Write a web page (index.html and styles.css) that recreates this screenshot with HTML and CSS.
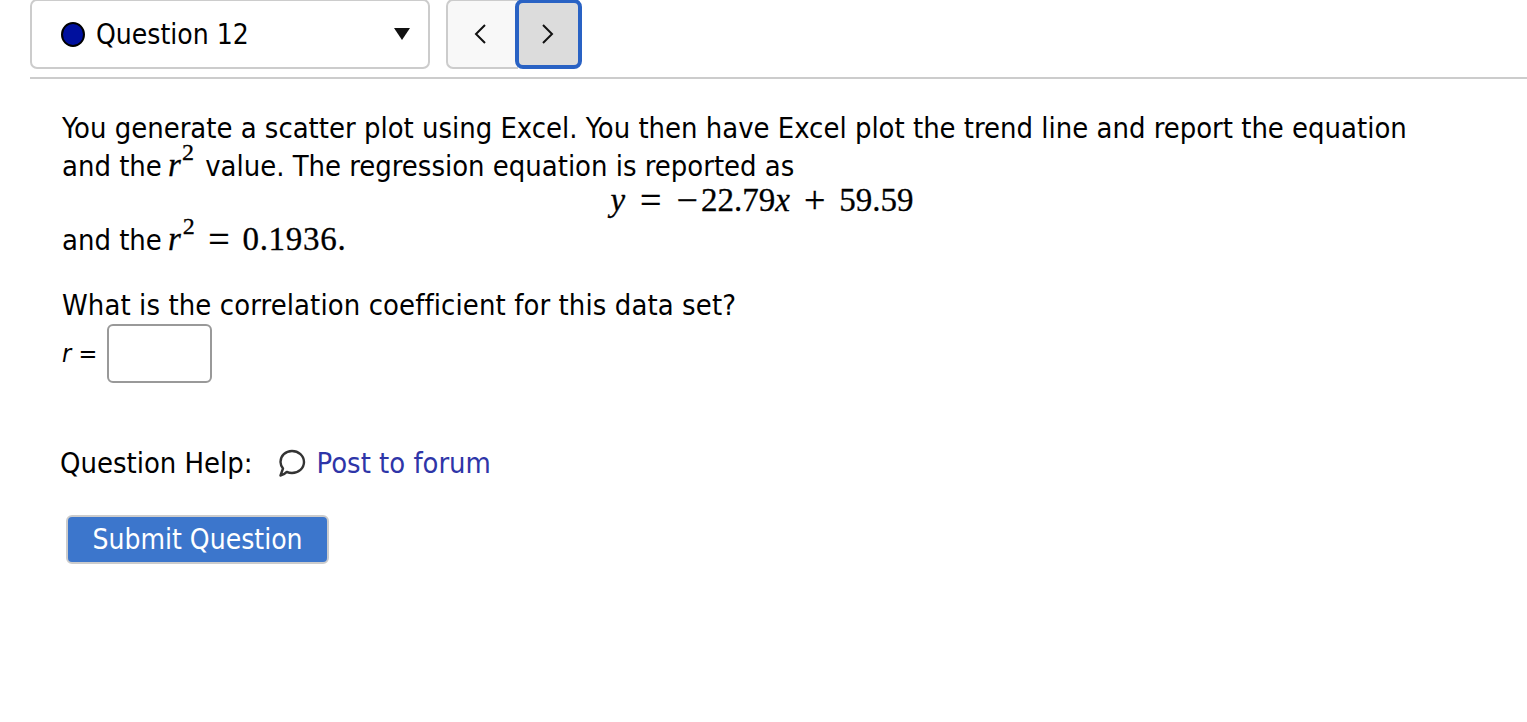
FILE: index.html
```html
<!DOCTYPE html>
<html lang="en">
<head>
    <meta charset="UTF-8">
    <title>Question 12</title>
    <link rel="stylesheet" href="styles.css">
</head>
<body>
    <div class="nav">
        <div class="select-box">
            <span class="status-dot"></span>
            <span class="select-label">Question 12</span>
            <span class="select-arrow"></span>
        </div>
        <div class="nav-btns">
            <button class="nav-btn prev">
                <svg width="14" height="22" viewBox="0 0 14 22"><path d="M12 2 3 11l9 9" fill="none" stroke="#111" stroke-width="2"/></svg>
            </button>
            <button class="nav-btn next">
                <svg width="14" height="22" viewBox="0 0 14 22"><path d="M2 2l9 9-9 9" fill="none" stroke="#111" stroke-width="2"/></svg>
            </button>
        </div>
    </div>

    <div class="question">
        <p class="para">You generate a scatter plot using Excel. You then have Excel plot the trend line and report the equation<br>
        and the <span class="math power"><i>r</i><sup>2</sup></span> value. The regression equation is reported as</p>
        <div class="math display"><i>y</i><span class="op rel">=</span><span class="op minus">&minus;</span>22.79<i>x</i><span class="op bin">+</span>59.59</div>
        <p class="para after-eq">and the <span class="math inline-eq"><i>r</i><sup>2</sup><span class="op rel">=</span>0.1936.</span></p>
        <p class="para ask">What is the correlation coefficient for this data set?</p>
        <div class="answer">
            <span class="answer-label"><i>r</i> =</span>
            <input class="answer-input" type="text">
        </div>
    </div>

    <div class="help">
        <span>Question Help:</span>
        <svg class="help-icon" width="28" height="28" viewBox="0 0 28 28"><path d="M2.500 26.500 5 19.500C3.500 17.500 2.500 15.300 2.500 13 2.500 6.800 7.500 2 14 2S26 6.800 26 13 20.500 24 14 24C12 24 10.300 23.600 8.800 22.900 7 24.800 4.800 26.100 2.500 26.500Z" fill="none" stroke="#333" stroke-width="2.400" stroke-linejoin="round"/></svg>
        <a class="help-link" href="#">Post to forum</a>
    </div>

    <button class="submit-btn">Submit Question</button>
</body>
</html>
```

FILE: styles.css
```css
* {
    margin: 0;
    padding: 0;
    box-sizing: border-box;
}

body {
    width: 1527px;
    height: 722px;
    font-family: "DejaVu Sans", sans-serif;
    font-stretch: condensed;
    font-size: 28.9px;
    color: #000;
    background: #fff;
    overflow: hidden;
    padding-left: 30px;
}

.nav {
    display: flex;
    height: 80px;
    padding-bottom: 9px;
    border-bottom: 2px solid #ccc;
    margin-top: -1px;
}

.select-box {
    width: 400px;
    height: 70px;
    border: 2px solid #ccc;
    border-radius: 7px;
    display: flex;
    align-items: center;
    padding-left: 29px;
}

.status-dot {
    width: 24px;
    height: 25px;
    border-radius: 50%;
    background: #00109e;
    border: 2px solid #000;
}

.select-label {
    margin-left: 11px;
    flex: 1;
    font-size: 28px;
}

.select-arrow {
    width: 0;
    height: 0;
    border-left: 8px solid transparent;
    border-right: 8px solid transparent;
    border-top: 12px solid #111;
    margin-right: 18px;
}

.nav-btns {
    display: flex;
    margin-left: 16px;
}

.nav-btn {
    height: 70px;
    display: flex;
    align-items: center;
    justify-content: center;
}

.prev {
    width: 72px;
    padding-right: 6px;
    background: #f8f8f8;
    border: 2px solid #ccc;
    border-right: 0;
    border-radius: 7px 0 0 7px;
}

.next {
    width: 67px;
    padding-right: 2px;
    background: #dcdcdc;
    border: 4px solid #2962c4;
    border-radius: 8px;
    margin-left: -3px;
}

.question {
    padding: 31px 0 0 32px;
}

.para {
    line-height: 37px;
}

.math {
    font-family: "Liberation Serif", serif;
    font-size: 33px;
    font-stretch: normal;
    -webkit-text-stroke: 0.3px #000;
}

.math sup {
    font-size: 24px;
    line-height: 0;
    vertical-align: 16px;
    margin-left: 1px;
}

.power {
    margin-left: -2px;
    margin-right: 3px;
}

.op {
    font-size: 38px;
    line-height: 0;
    vertical-align: -2px;
}

.rel {
    margin: 0 15px;
}

.minus {
    margin-right: 3px;
}

.bin {
    margin: 0 14px;
}

.inline-eq {
    margin-left: -2px;
    letter-spacing: 0.7px;
}

.inline-eq .rel {
    margin: 0 12px 0 13px;
}

.display {
    text-align: center;
    line-height: 31px;
    width: 1400px;
}

.after-eq {
    margin-top: 5px;
}

.ask {
    margin-top: 28px;
    letter-spacing: 0.11px;
}

.answer {
    display: flex;
    align-items: center;
}

.answer-label {
    font-size: 25px;
    width: 45px;
}

.answer-input {
    width: 105px;
    height: 59px;
    border: 2px solid #999;
    border-radius: 6px;
    background: #fff;
}

.help {
    display: flex;
    align-items: center;
    margin-top: 61px;
    margin-left: 30px;
    height: 37px;
}

.help-icon {
    margin-left: 25px;
}

.help-link {
    color: #2e35a8;
    text-decoration: none;
    margin-left: 11px;
}

.submit-btn {
    display: block;
    margin: 34px 0 0 36px;
    width: 263px;
    height: 49px;
    background: #3c76cc;
    border: 2px solid #ccc;
    border-radius: 6px;
    color: #fff;
    font-family: inherit;
    font-stretch: inherit;
    font-size: 28px;
}
```
